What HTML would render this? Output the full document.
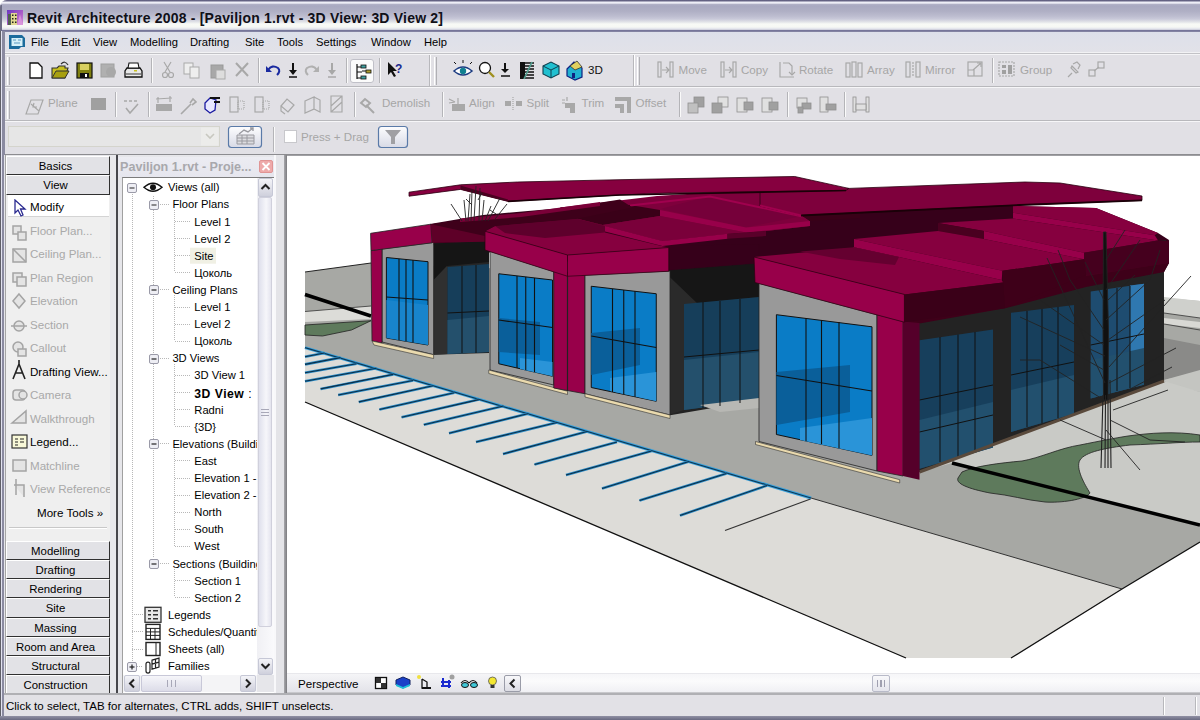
<!DOCTYPE html>
<html><head><meta charset="utf-8">
<style>
*{box-sizing:border-box}
html,body{margin:0;padding:0}
body{width:1200px;height:720px;overflow:hidden;position:relative;background:#fff;font-family:"Liberation Sans",sans-serif;font-size:11.2px;color:#000}
.a{position:absolute}
.t{position:absolute;white-space:nowrap;line-height:1}
.g{color:#a8a8a8}
#win{position:absolute;left:0;top:0;width:1200px;height:720px;background:#e1e0e5;border-top-left-radius:7px;overflow:hidden}
#title{left:0;top:0;width:1200px;height:32px;background:linear-gradient(to bottom,#5d5b7d 0px,#6a6888 1px,#ececf6 2px,#f0f0f8 3px,#b0b0c6 4.5px,#a9a9c1 6px,#afafc4 11px,#bcbccf 16px,#c9c9d9 19px,#e2e4e8 22px,#f8faf6 24px,#f6f8f4 27px,#e6e8ee 28.5px,#c8c8d6 30px,#76769a 30.5px,#8a8aa6 32px)}
#menu{left:0;top:32px;width:1200px;height:21px;background:linear-gradient(#dde0ea,#e2e2e8)}
.tb{position:absolute;height:32px;background:#e1e0e4}
.sep{position:absolute;width:2px;border-left:1px solid #b4b4b8;border-right:1px solid #fafafa}
.grip{position:absolute;width:3px;border-left:1px solid #fff;border-right:1px solid #b0b0b4}
.hl{position:absolute;left:0;width:1200px;height:1px}
</style></head><body>
<div id="win">
<div id="title" class="a"></div>
<!-- app icon -->
<svg class="a" style="left:7px;top:10px" width="16" height="15" viewBox="0 0 16 15">
<defs><linearGradient id="ig" x1="0" y1="0" x2="1" y2="1"><stop offset="0" stop-color="#6a38c0"/><stop offset="0.6" stop-color="#b060c8"/><stop offset="1" stop-color="#d890d8"/></linearGradient></defs>
<rect x="0" y="0" width="16" height="15" fill="url(#ig)"/>
<rect x="1" y="4" width="3" height="11" fill="#506050"/>
<rect x="4" y="3" width="6" height="12" fill="#e0d890"/>
<rect x="5" y="4.5" width="1.5" height="1.5" fill="#222"/><rect x="8" y="4.5" width="1.5" height="1.5" fill="#222"/>
<rect x="5" y="8" width="1.5" height="1.5" fill="#222"/><rect x="8" y="8" width="1.5" height="1.5" fill="#222"/>
<rect x="5" y="11.5" width="1.5" height="1.5" fill="#222"/><rect x="8" y="11.5" width="1.5" height="1.5" fill="#222"/>
<path d="M10,15 L13,4 L16,15 Z" fill="#e0a0e0" opacity="0.7"/>
</svg>
<div class="t" style="left:27px;top:11px;font-weight:bold;font-size:14px;letter-spacing:0.2px;color:#101018">Revit Architecture 2008 - [Paviljon 1.rvt - 3D View: 3D View 2]</div>

<div id="menu" class="a"></div>
<svg class="a" style="left:8px;top:34px" width="18" height="15" viewBox="0 0 18 15">
<path d="M1,1 h13 l3,3 v9 h-4 l-2,2 h-10 Z" fill="#1c6c9c"/>
<rect x="3.5" y="4" width="11" height="8" fill="#d6f0f8"/>
<path d="M5,6 h3 M10,6 h3 M6,9 h6" stroke="#5a9ac0" stroke-width="1.2"/>
</svg>
<div class="t" style="left:31px;top:36.5px">File</div>
<div class="t" style="left:61px;top:36.5px">Edit</div>
<div class="t" style="left:93px;top:36.5px">View</div>
<div class="t" style="left:130px;top:36.5px">Modelling</div>
<div class="t" style="left:190px;top:36.5px">Drafting</div>
<div class="t" style="left:245px;top:36.5px">Site</div>
<div class="t" style="left:277px;top:36.5px">Tools</div>
<div class="t" style="left:316px;top:36.5px">Settings</div>
<div class="t" style="left:371px;top:36.5px">Window</div>
<div class="t" style="left:424px;top:36.5px">Help</div>

<!-- toolbar area lines -->
<div class="hl" style="top:52px;background:#f2f2f4"></div>
<div class="hl" style="top:53px;background:#c2c2c6"></div>
<div class="hl" style="top:54px;background:#f4f4f6"></div>
<div class="hl" style="top:86px;background:#b8b8bc"></div>
<div class="hl" style="top:87px;background:#f6f6f8"></div>
<div class="hl" style="top:120px;background:#b8b8bc"></div>
<div class="hl" style="top:121px;background:#f6f6f8"></div>
<div class="hl" style="top:154px;background:#8c8c90"></div>

<!-- ROW1 / ROW2 / OPTIONS placeholder -->
<!--RSTART--><style>
.tt{position:absolute;white-space:nowrap;line-height:1;font-size:11.6px;color:#a6a6a6}
</style>
<!-- row separators between toolbars -->
<div class="grip" style="left:7px;top:57px;height:28px"></div>
<div class="grip" style="left:7px;top:91px;height:28px"></div>
<div class="sep" style="left:151px;top:58px;height:25px"></div>
<div class="sep" style="left:258px;top:58px;height:25px"></div>
<div class="sep" style="left:346px;top:58px;height:25px"></div>
<div class="sep" style="left:379px;top:58px;height:25px"></div>
<div class="a" style="left:429px;top:55px;width:2px;height:31px;border-left:1px solid #b8b8bc;border-right:1px solid #fff"></div>
<div class="grip" style="left:434px;top:57px;height:28px"></div>
<div class="a" style="left:633px;top:55px;width:2px;height:31px;border-left:1px solid #b8b8bc;border-right:1px solid #fff"></div>
<div class="grip" style="left:637px;top:57px;height:28px"></div>
<div class="sep" style="left:992px;top:58px;height:25px"></div>
<div class="sep" style="left:115px;top:92px;height:25px"></div>
<div class="sep" style="left:148px;top:92px;height:25px"></div>
<div class="sep" style="left:354px;top:92px;height:25px"></div>
<div class="sep" style="left:442px;top:92px;height:25px"></div>
<div class="sep" style="left:679px;top:92px;height:25px"></div>
<div class="sep" style="left:787px;top:92px;height:25px"></div>
<div class="sep" style="left:844px;top:92px;height:25px"></div>
<div class="sep" style="left:273px;top:127px;height:25px"></div>
<!-- pressed button -->
<div class="a" style="left:350px;top:59px;width:24px;height:24px;background:#fbfbfb;border:1px solid #c0c0c8;border-radius:3px"></div>
<svg class="a" style="left:0;top:52px" width="1200" height="102" viewBox="0 52 1200 102">
<!-- ROW 1 -->
<path d="M30,63 h8 l4,4 v11 h-12 Z" fill="#fff" stroke="#111" stroke-width="1.3"/>
<path d="M52,68 h5 l2,-2 h6 v2 h3 l-3,10 h-13 Z" fill="#c8c020" stroke="#333" stroke-width="1.1"/><path d="M52,78 l4,-7 h13 l-4,7 Z" fill="#a8a010" stroke="#333" stroke-width="1"/><path d="M61,64 q4,-4 7,1" stroke="#333" stroke-width="1.2" fill="none"/>
<rect x="77" y="63" width="15" height="15" fill="#808010" stroke="#111" stroke-width="1.2"/><rect x="80" y="64" width="9" height="6" fill="#d8d060"/><rect x="80" y="73" width="9" height="5" fill="#111"/><rect x="85" y="74" width="2" height="3" fill="#fff"/>
<rect x="101" y="64" width="13" height="13" fill="#b0b0b0" stroke="#a0a0a0"/><circle cx="111" cy="72" r="5" fill="#a8a8a8"/>
<path d="M127,68 h13 l2,3 v6 h-17 v-6 Z" fill="#e8e8e8" stroke="#111" stroke-width="1.3"/><path d="M129,63 h9 l1,5 h-11 Z" fill="#fff" stroke="#111" stroke-width="1.1"/><path d="M126,74 h15" stroke="#333" stroke-width="1"/><rect x="134" y="70" width="3" height="1.5" fill="#c8c020"/>
<path d="M164,62 l6,10 M171,62 l-6,10" stroke="#a8a8a8" stroke-width="1.2"/><circle cx="165" cy="75" r="2.5" fill="none" stroke="#a8a8a8" stroke-width="1.2"/><circle cx="171" cy="75" r="2.5" fill="none" stroke="#a8a8a8" stroke-width="1.2"/>
<rect x="184" y="63" width="9" height="11" fill="#eee" stroke="#aaa"/><rect x="190" y="67" width="9" height="11" fill="#eee" stroke="#aaa"/>
<rect x="211" y="65" width="12" height="13" fill="#a8a8a8" stroke="#999"/><rect x="216" y="70" width="9" height="9" fill="#ddd" stroke="#aaa"/>
<path d="M236,63 l12,13 M248,63 l-12,13" stroke="#a8a8a8" stroke-width="2"/>
<path d="M268,70 q4,-6 10,-2 q3,3 -1,7" stroke="#1a2aa0" stroke-width="2" fill="none"/><path d="M266,66 v6 h6 Z" fill="#1a2aa0"/>
<path d="M293,63 v8" stroke="#111" stroke-width="2"/><path d="M289,70 h8 l-4,5 Z" fill="#111"/><path d="M289,77 h8" stroke="#111" stroke-width="1.5"/>
<path d="M317,70 q-4,-6 -10,-2 q-3,3 1,7" stroke="#b0b0b0" stroke-width="2" fill="none"/><path d="M319,66 v6 h-6 Z" fill="#b0b0b0"/>
<path d="M332,63 v8" stroke="#a8a8a8" stroke-width="2"/><path d="M328,70 h8 l-4,5 Z" fill="#a8a8a8"/><path d="M328,77 h8" stroke="#a8a8a8" stroke-width="1.5"/>
<path d="M357,64 v15 M357,67 h5 M357,72 h5 M357,78 h5" stroke="#111" stroke-width="1.2" fill="none"/><rect x="361" y="65" width="5" height="3" fill="#40a0a0" stroke="#111" stroke-width="0.8"/><rect x="366" y="70" width="5" height="3" fill="#b0a030" stroke="#111" stroke-width="0.8"/><rect x="361" y="76" width="5" height="3" fill="#40a0a0" stroke="#111" stroke-width="0.8"/><path d="M366,71 h-4" stroke="#111"/>
<path d="M388,62 v13 l3,-3 l3,5 l2,-1 l-3,-5 h4 Z" fill="#111"/><text x="395" y="73" font-size="12" font-weight="bold" fill="#1a2a90" font-family="Liberation Sans">?</text>
<!-- toolbar 2 -->
<path d="M454,71 q9,-8 18,0 q-9,8 -18,0 Z" fill="#fff" stroke="#1a3a80" stroke-width="1.6"/><circle cx="463" cy="71" r="3.2" fill="#108090"/><path d="M456,64 l-2,-2 M463,63 v-3 M470,64 l2,-2" stroke="#111" stroke-width="1"/>
<circle cx="485" cy="68" r="5.5" fill="#fff" stroke="#111" stroke-width="1.3"/><path d="M489,72 l5,5" stroke="#a09020" stroke-width="2.4"/>
<path d="M505,63 v7" stroke="#111" stroke-width="2"/><path d="M501,69 h8 l-4,4 Z" fill="#111"/><path d="M501,76 h9" stroke="#111" stroke-width="1.5"/>
<path d="M520,63 h14 M520,66 h14 M520,69 h14 M520,72 h14 M520,75 h14 M520,78 h14" stroke="#111" stroke-width="1.4"/><rect x="520" y="62" width="5" height="17" fill="#111"/><path d="M532,62 l-8,17" stroke="#50a090" stroke-width="1.6"/>
<path d="M543,66 l8,-4 l8,4 v8 l-8,4 l-8,-4 Z" fill="#20c0d0" stroke="#104050" stroke-width="1.1"/><path d="M543,66 l8,4 l8,-4 M551,70 v8" stroke="#104050" stroke-width="1" fill="none"/>
<path d="M567,69 l7,-7 l8,6 v9 l-7,3 l-8,-4 Z" fill="#20b0d0" stroke="#102080" stroke-width="1.2"/><path d="M570,66 l7,-5 l5,6 l-7,3 Z" fill="#e0d060" stroke="#333" stroke-width="0.8"/><rect x="572" y="73" width="3" height="5" fill="#102080"/>
<text x="588" y="74" font-size="11.6" fill="#111" font-family="Liberation Sans">3D</text>
<!-- toolbar 3 -->
<g stroke="#a8a8a8" fill="none" stroke-width="1.2">
<rect x="658" y="62" width="3" height="15"/><rect x="670" y="62" width="3" height="15"/><path d="M662,70 h7 M666,67 l3,3 l-3,3"/>
<rect x="721" y="62" width="3" height="15"/><rect x="733" y="62" width="3" height="15"/><path d="M725,70 h7 M729,67 l3,3 l-3,3"/>
<path d="M780,62 v15 h14 M783,63 h6 l3,3 v8" /><path d="M789,72 l3,3 l3,-3"/>
<rect x="846" y="63" width="4" height="14"/><rect x="852" y="62" width="4" height="15"/><rect x="858" y="63" width="4" height="14"/>
<rect x="906" y="62" width="4" height="15"/><rect x="916" y="62" width="4" height="15"/><path d="M913,62 v15" stroke-dasharray="2,1"/>
<rect x="968" y="62" width="14" height="14"/><path d="M968,70 h6 v6 M973,70 l8,-7 M977,63 h4 v4"/>
<rect x="999" y="62" width="15" height="14" stroke-dasharray="2,1"/>
<path d="M1068,77 l4,-4 M1072,66 l6,6 l-2,1 l-5,-5 Z M1073,64 l4,-2 l3,3 l-2,4"/>
<rect x="1089" y="70" width="6" height="6"/><rect x="1098" y="62" width="6" height="6"/><path d="M1094,71 l5,-4"/>
</g>
<rect x="1002" y="65" width="4" height="3" fill="#a0a0a0"/><rect x="1002" y="70" width="4" height="4" fill="#a0a0a0"/><rect x="1008" y="65" width="4" height="9" fill="#a0a0a0"/>
<!-- ROW 2 -->
<g stroke="#a8a8a8" fill="none" stroke-width="1.2">
<path d="M26,114 l5,-14 h12 l-5,14 Z M31,104 l8,7 M34,103 l-1,4 l4,0"/>
<path d="M124,101 h3 M129,101 h3 M134,101 h3 M126,108 l4,5 l8,-9" stroke-width="1.6"/>
<path d="M156,99 l16,-1 M158,97 v6 M170,96 v6"/>
<path d="M181,114 l10,-10 M190,103 l3,-4 l3,3 l-4,3" stroke-width="1.6"/>
<rect x="230" y="97" width="8" height="15"/><rect x="238" y="101" width="6" height="8" stroke-dasharray="1,1"/>
<rect x="255" y="97" width="8" height="15"/><rect x="263" y="101" width="6" height="8" stroke-dasharray="1,1"/>
<path d="M281,106 l6,-7 l7,6 l-6,7 Z M281,106 v5 l4,3"/>
<path d="M305,101 l9,-4 v12 l-9,4 Z M314,97 l6,3 v12 l-6,-3"/>
<path d="M331,96 h11 v16 h-11 Z M331,106 l11,-10 M331,112 l11,-10"/>
<path d="M361,103 l4,-4 l5,4 l-4,4 Z M366,105 l8,8" stroke-width="2"/>
<path d="M449,99 l6,3 M449,103 l6,-1 M458,98 v10"/>
<path d="M506,103 h5 M516,103 h5 M513,97 v13" stroke-dasharray="1,1"/>
<path d="M562,100 h3 M562,103 h3 M567,97 v4"/>
</g>
<rect x="91" y="98" width="15" height="12" fill="#a0a0a0"/>
<rect x="156" y="104" width="16" height="7" fill="#a8a8a8"/>
<path d="M205,103 l5,-5 l6,2 l-1,10 l-5,3 l-5,-4 Z" fill="#e8e8ff" stroke="#1a1aa0" stroke-width="1.3"/><rect x="210" y="97" width="10" height="2" fill="#111"/><rect x="214" y="101" width="6" height="2" fill="#111"/>
<rect x="452" y="104" width="13" height="7" fill="#a8a8a8"/>
<rect x="505" y="101" width="6" height="5" fill="#a8a8a8"/><rect x="516" y="101" width="6" height="5" fill="#a8a8a8"/>
<path d="M565,103 h10 v10 h-5 v-5 h-5 Z" fill="#a8a8a8"/>
<path d="M615,97 h16 v16 h-4 v-12 h-12 Z M615,104 h9 v9 h-4 v-5 h-5 Z" fill="#a8a8a8"/>
<g fill="#a0a0a0" stroke="#909090" stroke-width="0.8">
<rect x="694" y="97" width="10" height="10"/><rect x="688" y="103" width="10" height="10" fill="#c0c0c0"/>
<rect x="718" y="97" width="10" height="10" fill="#e0e0e0"/><rect x="712" y="103" width="10" height="10"/>
<rect x="737" y="98" width="10" height="14" fill="#e0e0e0"/><rect x="744" y="102" width="9" height="8"/>
<rect x="762" y="98" width="10" height="14" fill="#e0e0e0"/><rect x="769" y="102" width="9" height="8"/>
<rect x="797" y="98" width="10" height="10" fill="#e0e0e0"/><rect x="802" y="103" width="9" height="6"/><rect x="798" y="107" width="5" height="6"/>
<rect x="820" y="97" width="8" height="15" fill="#e0e0e0"/><rect x="826" y="104" width="10" height="6"/>
<rect x="853" y="97" width="3" height="15" fill="#e0e0e0"/><rect x="866" y="97" width="3" height="15" fill="#e0e0e0"/><rect x="856" y="104" width="10" height="6" fill="#e0e0e0"/>
</g>
<!-- OPTIONS BAR -->
<rect x="8.5" y="126.5" width="211" height="20" fill="#e6e6e6" stroke="#d4d4cc"/>
<rect x="201" y="127.5" width="17.5" height="18" fill="#ececea"/>
<path d="M206,134 l4,4 l4,-4" stroke="#c8c8c0" stroke-width="1.6" fill="none"/>
<defs><linearGradient id="bg1" x1="0" y1="0" x2="0" y2="1"><stop offset="0" stop-color="#fdfdfe"/><stop offset="1" stop-color="#d8dae6"/></linearGradient></defs><rect x="228.5" y="126.5" width="33" height="21" rx="3" fill="url(#bg1)" stroke="#5a7aa8" stroke-width="1.2"/>
<path d="M237,135 h17 v9 h-17 Z M237,138 h17 M237,141 h17 M242,135 v9 M247,135 v9" stroke="#9a9aa0" stroke-width="1" fill="#dcdce0"/>
<path d="M239,134 l5,-4 l4,2 l5,-4 M250,128 h3 v3" stroke="#9a9aa0" stroke-width="1.4" fill="none"/>
<rect x="284.5" y="130.5" width="12" height="12" fill="#fff" stroke="#c8c8cc"/>
<rect x="378.5" y="126.5" width="29" height="21" rx="3" fill="url(#bg1)" stroke="#5a7aa8" stroke-width="1.2"/>
<path d="M385,130 h16 l-6,7 v7 h-4 v-7 Z" fill="#a0a0a4"/>
</svg>
<div class="tt" style="left:48px;top:96.5px">Plane</div>
<div class="tt" style="left:382px;top:96.5px">Demolish</div>
<div class="tt" style="left:469px;top:96.5px">Align</div>
<div class="tt" style="left:526.5px;top:96.5px">Split</div>
<div class="tt" style="left:581.5px;top:96.5px">Trim</div>
<div class="tt" style="left:635.5px;top:96.5px">Offset</div>
<div class="tt" style="left:678.5px;top:64px">Move</div>
<div class="tt" style="left:741px;top:64px">Copy</div>
<div class="tt" style="left:799px;top:64px">Rotate</div>
<div class="tt" style="left:867px;top:64px">Array</div>
<div class="tt" style="left:925px;top:64px">Mirror</div>
<div class="tt" style="left:1020px;top:64px">Group</div>
<div class="tt" style="left:301px;top:130.5px">Press + Drag</div>
<!--REND-->

<!-- left border -->
<div class="a" style="left:0;top:5px;width:2px;height:26px;background:#6c6c84"></div>
<div class="a" style="left:0;top:31px;width:5px;height:689px;background:linear-gradient(to right,#606068 0,#606068 1px,#e2e2f0 1px,#e2e2f0 2.5px,#8a8aa0 2.5px,#8a8aa0 5px)"></div>


<!--LSTART--><!-- DESIGN BAR -->
<div class="a" style="left:4px;top:155px;width:112px;height:539px;background:#e6e6ea"></div>
<div class="a" style="left:5px;top:155px;width:1px;height:539px;background:#a4a4a4"></div>
<div class="a" style="left:6px;top:195px;width:105.5px;height:346px;background:#efefef"></div>
<style>
.db{position:absolute;left:6px;width:104px;background:#e2e2e6;border-top:1px solid #fff;border-left:1px solid #fff;border-right:1px solid #303030;border-bottom:1px solid #303030;text-align:center;line-height:18.6px;font-size:11.4px;padding-right:5px}
.di{position:absolute;left:30px;white-space:nowrap;line-height:1;font-size:11.6px;color:#a9a9a9}
.tr{position:absolute;white-space:nowrap;line-height:1;font-size:11.2px}
</style>
<div class="db" style="top:156px;height:19px">Basics</div>
<div class="db" style="top:175px;height:20px">View</div>
<div class="a" style="left:8px;top:195px;width:101px;height:22px;background:#fff;border-bottom:1px solid #d4d4d4"></div>
<svg class="a" style="left:14px;top:199px" width="13" height="18" viewBox="0 0 13 18"><path d="M1,1 L1,14 L4,11 L7,17 L9,16 L6.5,10 L11,10 Z" fill="#fff" stroke="#2a2a90" stroke-width="1.3"/></svg>
<div class="di" style="top:201px;color:#000">Modify</div>
<div class="di" style="top:224.5px">Floor Plan...</div>
<div class="di" style="top:248px">Ceiling Plan...</div>
<div class="di" style="top:271.5px">Plan Region</div>
<div class="di" style="top:295px">Elevation</div>
<div class="di" style="top:318.5px">Section</div>
<div class="di" style="top:342px">Callout</div>
<div class="di" style="top:365.5px;color:#000">Drafting View...</div>
<div class="di" style="top:389px">Camera</div>
<div class="di" style="top:412.5px">Walkthrough</div>
<div class="di" style="top:436px;color:#000">Legend...</div>
<div class="di" style="top:459.5px">Matchline</div>
<div class="di" style="top:483px">View Reference</div>
<div class="di" style="top:506.5px;left:37px;color:#000">More Tools &#187;</div>
<svg class="a" style="left:10px;top:223px" width="20" height="300" viewBox="0 0 20 300">
<g fill="#e4e4e4" stroke="#a4a4a4" stroke-width="1.5">
<rect x="3" y="3" width="8" height="8"/><rect x="8" y="9" width="8" height="8"/>
<rect x="3" y="26" width="13" height="13"/><path d="M3,26 L16,39"/>
<rect x="3" y="50" width="9" height="9"/><rect x="7" y="54" width="9" height="9"/>
<path d="M9,71 L15,78 L9,85 L3,78 Z"/>
<circle cx="9" cy="103" r="5"/><path d="M1,103 L17,103"/>
<circle cx="8" cy="124" r="5"/><rect x="8" y="126" width="8" height="7"/>
<rect x="3" y="167" width="12" height="10" rx="3"/><circle cx="13" cy="172" r="4"/>
<path d="M2,200 L16,188 L16,200 Z"/>
<rect x="3" y="237" width="13" height="11"/>
<path d="M4,262 L14,262 L14,274 M6,256 L6,272"/>
</g>
<path d="M9,141 L3,156 M9,141 L15,156 M5,150 L13,150 M9,141 L9,137" stroke="#222" stroke-width="1.6" fill="none"/>
<rect x="2" y="212" width="15" height="13" fill="#f8f8d8" stroke="#333" stroke-width="1.2"/>
<path d="M5,216 L8,216 M10,216 L14,216 M5,219 L8,219 M10,219 L14,219 M5,222 L8,222" stroke="#222" stroke-width="1"/>
</svg>
<div class="a" style="left:9px;top:527px;width:98px;height:2px;border-top:1px solid #c8c8c8;border-bottom:1px solid #fff"></div>
<div class="a" style="left:6px;top:541px;width:104px;height:153px;background:#e6e6ea"></div>
<div class="db" style="top:541px;height:19px">Modelling</div>
<div class="db" style="top:560px;height:19px">Drafting</div>
<div class="db" style="top:579px;height:19px">Rendering</div>
<div class="db" style="top:598px;height:19.5px">Site</div>
<div class="db" style="top:617.5px;height:19px">Massing</div>
<div class="db" style="top:636.5px;height:19px">Room and Area</div>
<div class="db" style="top:655.5px;height:19px">Structural</div>
<div class="db" style="top:674.5px;height:19px">Construction</div>

<!-- PROJECT BROWSER -->
<div class="a" style="left:110px;top:155px;width:6px;height:539px;background:#e8e8ec"></div>
<div class="a" style="left:116px;top:155px;width:2px;height:539px;background:#46464c"></div>
<div class="a" style="left:118px;top:155px;width:166px;height:539px;background:#e6e6ea"></div>
<div class="a" style="left:118px;top:157px;width:156px;height:20px;background:linear-gradient(#ececf2,#e6e6ee)"></div>
<div class="tr" style="left:120px;top:161px;font-weight:bold;font-size:12.6px;color:#a8a8ac">Paviljon 1.rvt - Proje...</div>
<div class="a" style="left:259px;top:160px;width:14px;height:13px;background:#eeaaaa;border:1px solid #e09494;border-radius:2px"></div>
<svg class="a" style="left:259px;top:160px" width="14" height="13"><path d="M3.5,3 L10.5,10 M10.5,3 L3.5,10" stroke="#fff" stroke-width="1.8"/></svg>
<div class="a" style="left:122px;top:177px;width:152px;height:516px;border-top:1px solid #7c7c7c;border-left:1px solid #a0a0a0;background:#fff"></div>
<!-- v scrollbar -->
<div class="a" style="left:257px;top:178px;width:17px;height:497px;background:linear-gradient(to right,#f0f0f4,#fafafc)"></div>
<div class="a" style="left:258px;top:178px;width:15px;height:19px;background:linear-gradient(#f4f4f8,#cfd0dc);border:1px solid #c6c8d6;border-radius:2px"></div>
<svg class="a" style="left:258px;top:178px" width="15" height="19"><path d="M3.5,11 L7.5,7 L11.5,11" stroke="#222" stroke-width="2" fill="none"/></svg>
<div class="a" style="left:258px;top:197px;width:14px;height:430px;background:linear-gradient(to right,#dfe0ec,#f6f6fa 60%,#e4e4ee);border:1px solid #d0d0dc;border-radius:2px"></div>
<div class="a" style="left:261px;top:409px;width:8px;height:7px;border-top:1px solid #a8a8b8;border-bottom:1px solid #a8a8b8"></div>
<div class="a" style="left:261px;top:412px;width:8px;height:1px;background:#a8a8b8"></div>
<div class="a" style="left:258px;top:658px;width:15px;height:17px;background:linear-gradient(#f4f4f8,#cfd0dc);border:1px solid #c6c8d6;border-radius:2px"></div>
<svg class="a" style="left:258px;top:658px" width="15" height="17"><path d="M3.5,6 L7.5,10 L11.5,6" stroke="#222" stroke-width="2" fill="none"/></svg>
<!-- h scrollbar -->
<div class="a" style="left:123px;top:675px;width:134px;height:17px;background:#f4f4f6"></div>
<div class="a" style="left:124px;top:675px;width:16px;height:17px;background:linear-gradient(#f4f4f8,#cfd0dc);border:1px solid #c6c8d6;border-radius:2px"></div>
<svg class="a" style="left:124px;top:675px" width="16" height="17"><path d="M10,4.5 L6,8.5 L10,12.5" stroke="#222" stroke-width="2" fill="none"/></svg>
<div class="a" style="left:141px;top:675px;width:61px;height:17px;background:linear-gradient(#f6f6fa,#dcdce8);border:1px solid #c8c8d8;border-radius:2px"></div>
<div class="a" style="left:167px;top:680px;width:9px;height:7px;border-left:1px solid #a8a8b8;border-right:1px solid #a8a8b8"></div>
<div class="a" style="left:171px;top:680px;width:1px;height:7px;background:#a8a8b8"></div>
<div class="a" style="left:240px;top:675px;width:16px;height:17px;background:linear-gradient(#f4f4f8,#cfd0dc);border:1px solid #c6c8d6;border-radius:2px"></div>
<svg class="a" style="left:240px;top:675px" width="16" height="17"><path d="M6,4.5 L10,8.5 L6,12.5" stroke="#222" stroke-width="2" fill="none"/></svg>
<div class="a" style="left:257px;top:675px;width:17px;height:17px;background:#e6e6ea"></div>
<div class="a" style="left:274px;top:155px;width:2px;height:539px;background:#f8f8fa"></div>
<div class="a" style="left:276px;top:155px;width:8px;height:539px;background:#e4e4e8"></div>
<!--TSTART--><div class="a" style="left:123px;top:178px;width:134px;height:497px;overflow:hidden">
<svg class="a" style="left:0;top:0" width="134" height="497">
<line x1="9.5" y1="14" x2="9.5" y2="483" stroke="#b8b8b8" stroke-width="1" stroke-dasharray="1,1" shape-rendering="crispEdges"/>
<line x1="30.5" y1="18" x2="30.5" y2="380" stroke="#b8b8b8" stroke-width="1" stroke-dasharray="1,1" shape-rendering="crispEdges"/>
<line x1="9" y1="436.5" x2="20" y2="436.5" stroke="#b8b8b8" stroke-width="1" stroke-dasharray="1,1" shape-rendering="crispEdges"/>
<line x1="9" y1="453.5" x2="20" y2="453.5" stroke="#b8b8b8" stroke-width="1" stroke-dasharray="1,1" shape-rendering="crispEdges"/>
<line x1="9" y1="471.5" x2="20" y2="471.5" stroke="#b8b8b8" stroke-width="1" stroke-dasharray="1,1" shape-rendering="crispEdges"/>
<line x1="14" y1="488.5" x2="20" y2="488.5" stroke="#b8b8b8" stroke-width="1" stroke-dasharray="1,1" shape-rendering="crispEdges"/>
<line x1="35" y1="26.5" x2="47" y2="26.5" stroke="#b8b8b8" stroke-width="1" stroke-dasharray="1,1" shape-rendering="crispEdges"/>
<line x1="35" y1="111.5" x2="47" y2="111.5" stroke="#b8b8b8" stroke-width="1" stroke-dasharray="1,1" shape-rendering="crispEdges"/>
<line x1="35" y1="180.5" x2="47" y2="180.5" stroke="#b8b8b8" stroke-width="1" stroke-dasharray="1,1" shape-rendering="crispEdges"/>
<line x1="35" y1="265.5" x2="47" y2="265.5" stroke="#b8b8b8" stroke-width="1" stroke-dasharray="1,1" shape-rendering="crispEdges"/>
<line x1="35" y1="385.5" x2="47" y2="385.5" stroke="#b8b8b8" stroke-width="1" stroke-dasharray="1,1" shape-rendering="crispEdges"/>
<line x1="51.5" y1="32" x2="51.5" y2="94" stroke="#b8b8b8" stroke-width="1" stroke-dasharray="1,1" shape-rendering="crispEdges"/>
<line x1="52" y1="43.5" x2="68" y2="43.5" stroke="#b8b8b8" stroke-width="1" stroke-dasharray="1,1" shape-rendering="crispEdges"/>
<line x1="52" y1="60.5" x2="68" y2="60.5" stroke="#b8b8b8" stroke-width="1" stroke-dasharray="1,1" shape-rendering="crispEdges"/>
<line x1="52" y1="77.5" x2="68" y2="77.5" stroke="#b8b8b8" stroke-width="1" stroke-dasharray="1,1" shape-rendering="crispEdges"/>
<line x1="52" y1="94.5" x2="68" y2="94.5" stroke="#b8b8b8" stroke-width="1" stroke-dasharray="1,1" shape-rendering="crispEdges"/>
<line x1="51.5" y1="117" x2="51.5" y2="163" stroke="#b8b8b8" stroke-width="1" stroke-dasharray="1,1" shape-rendering="crispEdges"/>
<line x1="52" y1="129.5" x2="68" y2="129.5" stroke="#b8b8b8" stroke-width="1" stroke-dasharray="1,1" shape-rendering="crispEdges"/>
<line x1="52" y1="146.5" x2="68" y2="146.5" stroke="#b8b8b8" stroke-width="1" stroke-dasharray="1,1" shape-rendering="crispEdges"/>
<line x1="52" y1="163.5" x2="68" y2="163.5" stroke="#b8b8b8" stroke-width="1" stroke-dasharray="1,1" shape-rendering="crispEdges"/>
<line x1="51.5" y1="186" x2="51.5" y2="248" stroke="#b8b8b8" stroke-width="1" stroke-dasharray="1,1" shape-rendering="crispEdges"/>
<line x1="52" y1="197.5" x2="68" y2="197.5" stroke="#b8b8b8" stroke-width="1" stroke-dasharray="1,1" shape-rendering="crispEdges"/>
<line x1="52" y1="214.5" x2="68" y2="214.5" stroke="#b8b8b8" stroke-width="1" stroke-dasharray="1,1" shape-rendering="crispEdges"/>
<line x1="52" y1="231.5" x2="68" y2="231.5" stroke="#b8b8b8" stroke-width="1" stroke-dasharray="1,1" shape-rendering="crispEdges"/>
<line x1="52" y1="248.5" x2="68" y2="248.5" stroke="#b8b8b8" stroke-width="1" stroke-dasharray="1,1" shape-rendering="crispEdges"/>
<line x1="51.5" y1="271" x2="51.5" y2="368" stroke="#b8b8b8" stroke-width="1" stroke-dasharray="1,1" shape-rendering="crispEdges"/>
<line x1="52" y1="282.5" x2="68" y2="282.5" stroke="#b8b8b8" stroke-width="1" stroke-dasharray="1,1" shape-rendering="crispEdges"/>
<line x1="52" y1="300.5" x2="68" y2="300.5" stroke="#b8b8b8" stroke-width="1" stroke-dasharray="1,1" shape-rendering="crispEdges"/>
<line x1="52" y1="317.5" x2="68" y2="317.5" stroke="#b8b8b8" stroke-width="1" stroke-dasharray="1,1" shape-rendering="crispEdges"/>
<line x1="52" y1="334.5" x2="68" y2="334.5" stroke="#b8b8b8" stroke-width="1" stroke-dasharray="1,1" shape-rendering="crispEdges"/>
<line x1="52" y1="351.5" x2="68" y2="351.5" stroke="#b8b8b8" stroke-width="1" stroke-dasharray="1,1" shape-rendering="crispEdges"/>
<line x1="52" y1="368.5" x2="68" y2="368.5" stroke="#b8b8b8" stroke-width="1" stroke-dasharray="1,1" shape-rendering="crispEdges"/>
<line x1="51.5" y1="391" x2="51.5" y2="419" stroke="#b8b8b8" stroke-width="1" stroke-dasharray="1,1" shape-rendering="crispEdges"/>
<line x1="52" y1="402.5" x2="68" y2="402.5" stroke="#b8b8b8" stroke-width="1" stroke-dasharray="1,1" shape-rendering="crispEdges"/>
<line x1="52" y1="419.5" x2="68" y2="419.5" stroke="#b8b8b8" stroke-width="1" stroke-dasharray="1,1" shape-rendering="crispEdges"/>
<rect x="67" y="69.70000000000002" width="26" height="16" fill="#f0f0e4"/>
<rect x="4.5" y="5.5" width="9" height="9" rx="1.5" fill="#eeeef4" stroke="#9a9aa8" stroke-width="1"/><line x1="6.5" y1="10.0" x2="11.5" y2="10.0" stroke="#222" stroke-width="1.2"/>
<rect x="26.5" y="22.5" width="9" height="9" rx="1.5" fill="#eeeef4" stroke="#9a9aa8" stroke-width="1"/><line x1="28.5" y1="27.0" x2="33.5" y2="27.0" stroke="#222" stroke-width="1.2"/>
<rect x="26.5" y="107.5" width="9" height="9" rx="1.5" fill="#eeeef4" stroke="#9a9aa8" stroke-width="1"/><line x1="28.5" y1="112.0" x2="33.5" y2="112.0" stroke="#222" stroke-width="1.2"/>
<rect x="26.5" y="176.5" width="9" height="9" rx="1.5" fill="#eeeef4" stroke="#9a9aa8" stroke-width="1"/><line x1="28.5" y1="181.0" x2="33.5" y2="181.0" stroke="#222" stroke-width="1.2"/>
<rect x="26.5" y="261.5" width="9" height="9" rx="1.5" fill="#eeeef4" stroke="#9a9aa8" stroke-width="1"/><line x1="28.5" y1="266.0" x2="33.5" y2="266.0" stroke="#222" stroke-width="1.2"/>
<rect x="26.5" y="381.5" width="9" height="9" rx="1.5" fill="#eeeef4" stroke="#9a9aa8" stroke-width="1"/><line x1="28.5" y1="386.0" x2="33.5" y2="386.0" stroke="#222" stroke-width="1.2"/>
<rect x="4.5" y="484.5" width="9" height="9" rx="1.5" fill="#eeeef4" stroke="#9a9aa8" stroke-width="1"/><line x1="6.5" y1="489.0" x2="11.5" y2="489.0" stroke="#222" stroke-width="1.2"/><line x1="9.0" y1="486.5" x2="9.0" y2="491.5" stroke="#222" stroke-width="1.2"/>
<path d="M21,9.300000000000011 Q30,1.3000000000000114 39,9.300000000000011 Q30,17.30000000000001 21,9.300000000000011 Z" fill="#fff" stroke="#111" stroke-width="1.5"/><circle cx="30" cy="9.300000000000011" r="3" fill="#111"/>
<rect x="22" y="429.30000000000007" width="16" height="15" fill="#e8e8e8" stroke="#333" stroke-width="1.3"/><path d="M25,432.80000000000007 h3 M30,432.80000000000007 h5 M25,436.80000000000007 h3 M30,436.80000000000007 h5 M25,440.80000000000007 h3 M30,440.80000000000007 h5" stroke="#333" stroke-width="1.6"/>
<rect x="23" y="446.4000000000001" width="14" height="15" fill="#fff" stroke="#222" stroke-width="1.4"/><path d="M23,450.4000000000001 h14 M23,453.9000000000001 h14 M23,457.4000000000001 h14 M27.5,450.4000000000001 v11 M32,450.4000000000001 v11" stroke="#222" stroke-width="1"/>
<rect x="23" y="464.5" width="14" height="13" fill="#fff" stroke="#222" stroke-width="1.4"/><path d="M33,465.0 v12" stroke="#222" stroke-width="1"/>
<rect x="23" y="484.10000000000014" width="4" height="11" rx="2" fill="#fff" stroke="#222" stroke-width="1.2"/><path d="M29,482.10000000000014 l7,-2 v9 l-7,2 Z M29,486.10000000000014 l7,-2 M32.5,481.10000000000014 v9" fill="#fff" stroke="#222" stroke-width="1.2"/>
</svg>
<div class="tr" style="left:45.0px;top:4.3px">Views (all)</div>
<div class="tr" style="left:49.4px;top:21.4px">Floor Plans</div>
<div class="tr" style="left:71.3px;top:38.5px">Level 1</div>
<div class="tr" style="left:71.3px;top:55.6px">Level 2</div>
<div class="tr" style="left:71.3px;top:72.7px">Site</div>
<div class="tr" style="left:71.3px;top:89.8px">Цоколь</div>
<div class="tr" style="left:49.4px;top:106.9px">Ceiling Plans</div>
<div class="tr" style="left:71.3px;top:124.0px">Level 1</div>
<div class="tr" style="left:71.3px;top:141.1px">Level 2</div>
<div class="tr" style="left:71.3px;top:158.2px">Цоколь</div>
<div class="tr" style="left:49.4px;top:175.3px">3D Views</div>
<div class="tr" style="left:71.3px;top:192.4px">3D View 1</div>
<div class="tr" style="left:71.3px;top:209.5px;font-weight:bold;font-size:12.2px;letter-spacing:0.5px">3D View <span style="font-weight:normal">:</span></div>
<div class="tr" style="left:71.3px;top:226.6px">Radni</div>
<div class="tr" style="left:71.3px;top:243.7px">{3D}</div>
<div class="tr" style="left:49.4px;top:260.8px">Elevations (Building Elevation)</div>
<div class="tr" style="left:71.3px;top:277.9px">East</div>
<div class="tr" style="left:71.3px;top:295.0px">Elevation 1 - a</div>
<div class="tr" style="left:71.3px;top:312.1px">Elevation 2 - a</div>
<div class="tr" style="left:71.3px;top:329.2px">North</div>
<div class="tr" style="left:71.3px;top:346.3px">South</div>
<div class="tr" style="left:71.3px;top:363.4px">West</div>
<div class="tr" style="left:49.4px;top:380.5px">Sections (Building Section)</div>
<div class="tr" style="left:71.3px;top:397.6px">Section 1</div>
<div class="tr" style="left:71.3px;top:414.7px">Section 2</div>
<div class="tr" style="left:45.0px;top:431.8px">Legends</div>
<div class="tr" style="left:45.0px;top:448.9px">Schedules/Quantities</div>
<div class="tr" style="left:45.0px;top:466.0px">Sheets (all)</div>
<div class="tr" style="left:45.0px;top:483.1px">Families</div>
</div><!--TEND-->
<!--LEND-->

<!-- 3D VIEW -->
<div class="a" style="left:284px;top:155px;width:3px;height:539px;background:linear-gradient(to right,#a8a8ac,#7c7c80)"></div>
<div class="a" style="left:287px;top:155px;width:913px;height:1px;background:#a0a0a4"></div>
<svg class="a" style="left:287px;top:156px" width="913" height="517" viewBox="287 156 913 517">
<rect x="287" y="156" width="913" height="517" fill="#fff"/>
<!-- ground -->
<polygon points="305,272 371,263 1000,290 1164,298 1200,301 1200,542 1122,589 1011,658 906,658 305,402" fill="#a7a8a4"/>
<polyline points="305,272 371,263" stroke="#222" stroke-width="1" fill="none"/>
<!-- right far bands -->
<polygon points="1164,297 1200,301 1200,318 1164,313" fill="#cfd0cc"/>
<polyline points="1164,313 1200,318" stroke="#333" stroke-width="0.8" fill="none"/>
<polygon points="1164,318 1200,322 1200,328 1164,324" fill="#d8d8d4"/>
<polyline points="1164,324 1200,330" stroke="#333" stroke-width="0.8" fill="none"/>
<polygon points="1164,338 1200,345 1200,372 1164,380" fill="#8a8a88"/>
<polygon points="1164,380 1200,370 1200,392 1170,385" fill="#c4c5c1"/>
<!-- left strips -->
<polygon points="305,311.5 371,306 371,319 305,322" fill="#dcdcd8"/>
<polyline points="305,311.5 371,306" stroke="#333" stroke-width="0.8" fill="none"/>
<polygon points="305,325 371,320.7 351.5,330 322.5,336 305,335" fill="#5e7a5c" stroke="#222" stroke-width="0.8"/>
<polyline points="305,294.5 371,316" stroke="#000" stroke-width="3.5" fill="none"/>
<!-- light plane -->
<polygon points="305,348 811,498 1122,589 1011,658 906,658 305,402" fill="#dddcd8"/>
<polyline points="305,402 906,658" stroke="#111" stroke-width="1.3" fill="none"/>
<polyline points="1011,658 1122,589 1200,542" stroke="#111" stroke-width="1.3" fill="none"/>
<polyline points="811,498 1122,589" stroke="#333" stroke-width="1" fill="none"/>
<!-- right lighter area and green blob -->
<polygon points="919.5,472 1164,381 1200,392 1200,525 952,463" fill="#c9cac6"/>
<path d="M962,472 C975,466 1000,463 1022,461 C1040,458 1060,448 1080,445 C1100,441 1115,438 1128,436 C1150,433 1175,431 1200,435 L1200,442 C1180,442 1160,444 1130,445 C1105,448 1085,452 1080,460 C1075,468 1085,485 1090,493 C1085,500 1060,503 1045,502 C1025,500 1010,495 990,493 C975,490 955,485 958,478 Z" fill="#5e7a5c" stroke="#222" stroke-width="0.8"/>
<polyline points="952,463 1200,525" stroke="#000" stroke-width="3.5" fill="none"/>
<!-- curb -->
<polyline points="305,347.6 811,498" stroke="#3aa2dc" stroke-width="3" fill="none"/>
<polyline points="305,347.6 811,498" stroke="#0c3a5a" stroke-width="1.2" fill="none"/>
<g stroke="#2a8ac4" stroke-width="2.6" fill="none">
<line x1="305" y1="356.8" x2="324.4" y2="353"/>
<line x1="305" y1="364.4" x2="340.5" y2="357.6"/>
<line x1="305" y1="372.8" x2="356.5" y2="363.7"/>
<line x1="305" y1="381.3" x2="376.4" y2="368.3"/>
<line x1="320.6" y1="388.9" x2="393.2" y2="374.4"/>
<line x1="338.2" y1="395" x2="413" y2="380.5"/>
<line x1="358.8" y1="401.9" x2="433" y2="385.8"/>
<line x1="379.4" y1="409.5" x2="454.3" y2="392.7"/>
<line x1="401.6" y1="417.2" x2="478.8" y2="399.6"/>
<line x1="423.8" y1="424.8" x2="503.5" y2="406"/>
<line x1="449" y1="433.2" x2="528.5" y2="413.5"/>
<line x1="476" y1="442" x2="557" y2="422.5"/>
<line x1="503" y1="454" x2="587" y2="431.5"/>
<line x1="534.5" y1="464.5" x2="617" y2="442"/>
<line x1="566" y1="475" x2="651.5" y2="451"/>
<line x1="602" y1="488.5" x2="689" y2="461.5"/>
<line x1="639.5" y1="500.5" x2="726.5" y2="473.5"/>
<line x1="680" y1="515.5" x2="767" y2="485.5"/>
</g>
<g stroke="#0a2e48" stroke-width="1.1" fill="none">
<line x1="305" y1="356.8" x2="324.4" y2="353"/>
<line x1="305" y1="364.4" x2="340.5" y2="357.6"/>
<line x1="305" y1="372.8" x2="356.5" y2="363.7"/>
<line x1="305" y1="381.3" x2="376.4" y2="368.3"/>
<line x1="320.6" y1="388.9" x2="393.2" y2="374.4"/>
<line x1="338.2" y1="395" x2="413" y2="380.5"/>
<line x1="358.8" y1="401.9" x2="433" y2="385.8"/>
<line x1="379.4" y1="409.5" x2="454.3" y2="392.7"/>
<line x1="401.6" y1="417.2" x2="478.8" y2="399.6"/>
<line x1="423.8" y1="424.8" x2="503.5" y2="406"/>
<line x1="449" y1="433.2" x2="528.5" y2="413.5"/>
<line x1="476" y1="442" x2="557" y2="422.5"/>
<line x1="503" y1="454" x2="587" y2="431.5"/>
<line x1="534.5" y1="464.5" x2="617" y2="442"/>
<line x1="566" y1="475" x2="651.5" y2="451"/>
<line x1="602" y1="488.5" x2="689" y2="461.5"/>
<line x1="639.5" y1="500.5" x2="726.5" y2="473.5"/>
<line x1="680" y1="515.5" x2="767" y2="485.5"/>
</g>
<line x1="725" y1="530.5" x2="810.5" y2="499" stroke="#333" stroke-width="1.1"/>
<!--BSTART--><!-- roof dark base -->
<polygon points="430,224 483,215 585,206 846,190 1013,206 1096,208 1158,233 1169,240 1166,264 1164,272 919.5,324 903,323 756,266 668,273 485,252 432,245" fill="#36001a"/>
<polygon points="668.7,270 759,263 759,263.5 668.7,270.5" fill="none"/>
<!-- right wing facade -->
<polygon points="903,294 1002,281 1086,250 1166,240 1169,263 1164,272 1164,381 919.5,472 903,476" fill="#232323"/>
<polygon points="903,294 1002,281 1086,250 1166,241 1169,263 1164,272 1086,287 1005,308.3 919.5,323.5 903,323" fill="#3e0019"/>
<polygon points="1086,250 1166,241 1169,263 1086,276" fill="#4a0020"/>
<polygon points="919.5,340.3 993,329.6 993,447.4 919.5,468.8" fill="#173f5c"/>
<polygon points="1011,312.8 1074,305 1074,413.7 1011,432" fill="#173f5c"/>
<polygon points="1090.7,291.4 1144,283.8 1144,384.7 1090.7,398.4" fill="#1e4c70"/>
<polygon points="1130,285.5 1144,283.8 1144,355 1130,358" fill="#2f78b0"/>
<polygon points="919.5,420 993,402 993,447.4 919.5,468.8" fill="#22506e"/>
<polygon points="1011,390 1074,375 1074,413.7 1011,432" fill="#22506e"/>
<polygon points="1090.7,360 1144,348 1144,384.7 1090.7,398.4" fill="#22506e"/>
<g stroke="#111" stroke-width="1" fill="none">
<line x1="940" y1="337" x2="940" y2="462"/><line x1="958" y1="334.5" x2="958" y2="457"/><line x1="975" y1="332" x2="975" y2="452"/>
<line x1="919.5" y1="400" x2="993" y2="385"/><line x1="919.5" y1="432" x2="993" y2="415"/>
<line x1="1027" y1="311" x2="1027" y2="427"/><line x1="1042" y1="309" x2="1042" y2="423"/><line x1="1058" y1="307" x2="1058" y2="418"/>
<line x1="1011" y1="375" x2="1074" y2="362"/>
<line x1="1104" y1="289.5" x2="1104" y2="395"/><line x1="1117" y1="288" x2="1117" y2="391"/><line x1="1130" y1="286" x2="1130" y2="388"/>
<line x1="1090.7" y1="345" x2="1144" y2="334"/>
</g>
<polyline points="919.5,472 1164,381" stroke="#5a4a3c" stroke-width="3" fill="none"/>
<!-- recess A-B -->
<polygon points="433.6,243.6 489,241 489,353 433.6,354.7" fill="#262626"/>
<polygon points="433.6,243.6 489,241 489,262 447,266 433.6,280" fill="#151515"/>
<polygon points="433.6,280 447,266 447.5,354 433.6,354.7" fill="#303030"/>
<polygon points="447.5,267 489,264 489,352 447.5,354" fill="#163e5a"/>
<polygon points="447.5,320 489,316 489,352 447.5,354" fill="#24506c"/>
<g stroke="#111" stroke-width="1" fill="none"><line x1="462" y1="266" x2="462" y2="353"/><line x1="476" y1="265" x2="476" y2="353"/><line x1="447.5" y1="313" x2="489" y2="311"/></g>
<!-- recess B-C -->
<polygon points="668.7,270 759,263 759,400 668.7,415.4" fill="#222"/>
<polygon points="668.7,270 759,263 759,297 684,305 668.7,302" fill="#161616"/>
<polygon points="668.7,276 699,305 684,305 684,410 668.7,415" fill="#2a2a2a"/>
<polygon points="668.7,246 759,244 759,263 668.7,270" fill="#36001a" stroke="#36001a" stroke-width="0.5"/>
<polygon points="684,304 759,297 759,400 684,410" fill="#163e5a"/>
<polygon points="684,360 759,352 759,400 684,410" fill="#24506c"/>
<polygon points="700,405 759,398 759,408 720,412" fill="#b8b8b4"/>
<g stroke="#111" stroke-width="1" fill="none"><line x1="703" y1="302" x2="703" y2="408"/><line x1="720" y1="301" x2="720" y2="406"/><line x1="740" y1="299" x2="740" y2="403"/><line x1="684" y1="357" x2="759" y2="350"/></g>
<!-- block A -->
<polygon points="382,249 433.6,242.4 433.6,354.7 382,342" fill="#999999" stroke="#222" stroke-width="0.8"/>
<polygon points="386.4,257.5 428,261.7 428,345 386.4,338" fill="#0a7cc6" stroke="#111" stroke-width="1"/>
<polygon points="386.4,300 428,305 428,345 386.4,338" fill="#1884cc"/>
<g stroke="#111" stroke-width="1.1" fill="none"><line x1="399" y1="259" x2="399" y2="340"/><line x1="406" y1="259.5" x2="406" y2="341"/><line x1="413" y1="260" x2="413" y2="342.5"/><line x1="386.4" y1="297" x2="428" y2="300"/></g>
<polygon points="371,250.6 382,249 382,343 372,341" fill="#98004a" stroke="#222" stroke-width="0.8"/>
<polygon points="372,341 433.6,354.7 433.6,358.5 374,345" fill="#eadaae" stroke="#333" stroke-width="0.6"/>
<polygon points="370.6,233.3 430.8,224.2 432,242.8 371,250.6" fill="#98004a" stroke="#222" stroke-width="0.8"/>
<polygon points="430.8,224.2 485,218 485,241.7 432,242.8" fill="#5e0028"/>
<!-- block B -->
<polygon points="490,251.3 553.75,271.6 553.75,385 490,370" fill="#999999" stroke="#222" stroke-width="0.8"/>
<polygon points="498.75,273.75 552.5,280 552.5,376.25 498.75,363.75" fill="#0a7cc6" stroke="#111" stroke-width="1"/>
<polygon points="498.75,318 540,322 540,355 498.75,352" fill="#0a5f9a"/>
<polygon points="520,358 552.5,362 552.5,376.25 520,369" fill="#2a94d8"/>
<g stroke="#111" stroke-width="1.1" fill="none"><line x1="517" y1="276" x2="517" y2="368"/><line x1="525.75" y1="277" x2="525.75" y2="370"/><line x1="534.5" y1="278" x2="534.5" y2="372"/><line x1="498.75" y1="320" x2="552.5" y2="327.5"/></g>
<polygon points="488.75,370 567.5,391.25 567.5,394.5 488.75,373.5" fill="#eadaae" stroke="#333" stroke-width="0.6"/>
<polygon points="553.75,271 585,275 585,393.75 553.75,388" fill="#98004a" stroke="#222" stroke-width="0.8"/>
<line x1="567.5" y1="276" x2="567.5" y2="391" stroke="#222" stroke-width="1.2"/>
<polygon points="585,275.2 670,271 670,415 585,393.75" fill="#999999" stroke="#222" stroke-width="0.8"/>
<polygon points="591.25,286.25 656.25,293.75 656.25,401.25 591.25,387.5" fill="#0a7cc6" stroke="#111" stroke-width="1"/>
<polygon points="591.25,333 640,328 640,365 591.25,375" fill="#0a5f9a"/>
<polygon points="610,378 656.25,372 656.25,401.25 610,391" fill="#2a94d8"/>
<g stroke="#111" stroke-width="1.1" fill="none"><line x1="612.5" y1="289" x2="612.5" y2="392"/><line x1="623.75" y1="290" x2="623.75" y2="394"/><line x1="635" y1="291" x2="635" y2="397"/><line x1="591.25" y1="336" x2="656.25" y2="347.5"/></g>
<polygon points="585,393.75 670,415 670,418.5 585,397" fill="#eadaae" stroke="#333" stroke-width="0.6"/>
<!-- block C -->
<polygon points="759,283.3 877,314.8 877,471 759,441.5" fill="#999999" stroke="#222" stroke-width="0.8"/>
<polygon points="776.4,314.7 872,326.8 872,455.4 776.4,434.5" fill="#0a7cc6" stroke="#111" stroke-width="1"/>
<polygon points="776.4,372 850,365 850,412 776.4,425" fill="#0a5f9a"/>
<polygon points="800,428 872,418 872,455.4 800,440" fill="#2a94d8"/>
<g stroke="#111" stroke-width="1.1" fill="none"><line x1="806" y1="318" x2="806" y2="441"/><line x1="821.5" y1="320" x2="821.5" y2="444"/><line x1="839" y1="322" x2="839" y2="448"/><line x1="776.4" y1="375.5" x2="872" y2="391"/></g>
<polygon points="755.5,441.5 899.7,479.7 899.7,483 755.5,444.5" fill="#eadaae" stroke="#333" stroke-width="0.6"/>
<polygon points="877,314.5 903,321.5 903,476 877,471" fill="#98004a" stroke="#222" stroke-width="0.8"/>
<polygon points="903,321.5 919.5,323 919.5,479.7 903,476" fill="#55002a"/>
<!-- ROOFS -->
<polygon points="1013,206 1096,208 1158,233 1154.7,235.3 1013,212.7" fill="#86003f"/>
<polygon points="1013,212.7 1154.7,235.3 1158,240.5 1013,218.5" fill="#98004a"/>
<polygon points="938,223 1013,218.5 1158,240.5 1084,252.7 984,231" fill="#86003f"/>
<polygon points="938,223 984,231 984,239 938,231" fill="#4a0020"/>
<polygon points="984,231 1084,252.7 1084,259.3 984,239" fill="#98004a"/>
<polygon points="1084,252.7 1158,240.5 1169,241 1169,263 1086,275 1084,259.3" fill="#45001e"/>
<polygon points="854,239 938,231 984,239 1084,259.3 1002.4,270.8 899.6,249" fill="#86003f"/>

<polygon points="854,239 899.6,249 1002.4,270.8 1001.7,279.9 899,257 854,247.25" fill="#98004a"/>
<polygon points="1002.4,270.8 1084,259.3 1086,275 1005,308.3 1003,282.6" fill="#3e0019"/>
<polygon points="754,257 852.5,248 854,247.25 899,257 1001.7,279.9 1003,282.6 904.4,294.4" fill="#86003f"/>
<polygon points="800,251.5 854,247.25 899,257 895,265 840,259" fill="#650030"/>
<polygon points="754,257 904.4,294.4 904.4,322.2 755,282.5" fill="#98004a" stroke="#2a0010" stroke-width="0.7"/>
<polygon points="904.4,294.4 1003,282.6 1005,308.3 904.4,322.2" fill="#3a0018"/>
<!-- block B roof -->
<polygon points="560,207.5 657,196 710,192.5 846,189 860,190 860,211 802.5,216 810,221 810,226 766,231 727.5,233.75 662.5,241 605,226 577.5,218.75" fill="#7e003c"/>
<polygon points="560,207.5 630,205 660,210 660,216 602.5,225 577.5,218.75" fill="#3a0018"/>
<polygon points="660,209 710,196 802.5,216 746,227.5" fill="#76003a"/>
<polyline points="630,205.5 710,196.5 802.5,216.5" stroke="#a0004e" stroke-width="2" fill="none"/>
<polygon points="660,210 746,227.5 810,221 810,226 746,232.5 660,216" fill="#98004a"/>
<polygon points="802.5,216 860,211 860,218 810,221" fill="#3a0018"/>
<polygon points="577.5,218.75 602.5,225 660,216 746,232.5 810,226 766,231 727.5,233.75 662.5,241 605,226" fill="#7a003a"/>
<polygon points="605,226 662.5,241 727.5,233.75 727.5,238.75 662.5,246 605,231.5" fill="#98004a"/>
<polygon points="727.5,233.75 766,231 766,236 727.5,238.75" fill="#5a002a"/>
<polygon points="485,231.25 495,226 577.5,218.75 605,226.25 605,232.5 662.5,246.25 668.75,247.5 567.5,255" fill="#86003f"/>
<polygon points="495,226 577.5,218.75 605,226.25 605,232.5 545,238 505,233" fill="#5e002c"/>
<polygon points="485,231.25 567.5,255 567.5,276.25 485,250" fill="#98004a" stroke="#2a0010" stroke-width="0.7"/>
<polygon points="567.5,255 668.75,247.5 668.75,271.25 567.5,276.25" fill="#98004a" stroke="#2a0010" stroke-width="0.7"/>
<!-- block A roof strip -->
<polygon points="430.8,224.2 460,220.6 521,215 620,199.5 632.5,207.5 577.5,218.75 495,226 485,231.25 485,236" fill="#3e001a"/>
<polygon points="460,218.6 521,213 600,202 600,206 521,217 460,222" fill="#7a0038"/>
<!-- canopy -->
<polygon points="760,190.6 848.8,188.4 1025,182 1060,183 1142,196 1142,200.4 1020,205 801,215.5 760,206" fill="#7e003c" stroke="#2a0010" stroke-width="0.8"/>
<polyline points="801,215.5 1020,205 1142,200.4" stroke="#1a0008" stroke-width="1.8" fill="none"/>
<polyline points="760,205.5 801,215.5" stroke="#a0004e" stroke-width="2" fill="none"/>
<polygon points="409,192.2 460.5,184.8 517.4,182 620,179.7 794.7,176.5 848.8,188.4 846,190.5 668,193 620,195 508,201.4 460.5,189.4 409,196.2" fill="#86003f" stroke="#2a0010" stroke-width="0.8"/>
<polygon points="460.5,185.5 508,199.5 508,201.4 460.5,189.4" fill="#4a0020"/>
<polyline points="508,201.4 620,195 846,190.5" stroke="#1a0008" stroke-width="1.6" fill="none"/>
<!-- trees -->
<g stroke="#222" stroke-width="0.9" fill="none">
<path d="M462,221 L451,204 M466,221 L464,200 M468,221 L470,194 M471,221 L472,190 M474,221 L476,186 M479,221 L480,188 M482,221 L484,200 M485,221 L491,206 M488,221 L500,198 M495,219 L507,204 M472,205 L466,199 M478,200 L482,193 M490,210 L496,214"/>
<polygon points="1103.5,232 1106,232 1108.5,330 1108,400 1103.5,400 1103,330" fill="#111"/>
<path d="M1101,468 L1103,395 M1105,468 L1105.5,395 M1108,468 L1108,395 M1111,468 L1110,380" stroke="#222" stroke-width="1.1"/>
<path d="M1105,383 L1047,258 M1105,356 L1020,317 M1109,367 L1191,276 M1109,383 L1176,348 M1113,398 L1172,367 M1113,410 L1168,390 M1110,420 L1150,440 M1150,440 L1185,442 M1104,330 L1070,280 M1070,280 L1058,250 M1104,300 L1085,262 M1106,290 L1140,240 M1106,320 L1150,280 M1150,280 L1160,250 M1104,345 L1040,300 M1104,400 L1040,360 M1040,360 L1020,360 M1106,440 L1060,420 M1106,430 L1140,470 M1106,260 L1125,230 M1104,370 L1060,345 M1108,340 L1165,300 M1108,300 L1135,275" stroke="#222" stroke-width="0.9"/>
</g>
<!--BEND-->
</svg>
<!-- view control bar -->
<!--VSTART--><div class="a" style="left:287px;top:673px;width:913px;height:20px;background:linear-gradient(#f6f6f8,#ececf0 50%,#e2e2e8)"></div>
<div class="a" style="left:287px;top:673px;width:913px;height:1px;background:#e8e8ec"></div>
<div class="a" style="left:287px;top:692px;width:913px;height:1px;background:#c8c8cc"></div>
<div class="a" style="left:521px;top:674px;width:679px;height:18px;background:linear-gradient(#f6f6f8,#fbfbfc 40%,#f0f0f4)"></div>
<div class="a" style="left:872px;top:675px;width:18px;height:17px;background:linear-gradient(#f8f8fa,#e4e4ec);border:1px solid #b8bac8;border-radius:2px"></div>
<div class="a" style="left:877px;top:680px;width:8px;height:7px;border-left:1px solid #a0a0b0;border-right:1px solid #a0a0b0"></div>
<div class="a" style="left:880px;top:680px;width:2px;height:7px;border-left:1px solid #a0a0b0;border-right:1px solid #a0a0b0"></div>
<div class="t" style="left:298px;top:678px;font-size:11.6px">Perspective</div>
<svg class="a" style="left:370px;top:673px" width="160" height="20" viewBox="370 673 160 20">
<rect x="375.5" y="677.5" width="11" height="11" fill="#fff" stroke="#111" stroke-width="1.3"/><rect x="376" y="678" width="5" height="5" fill="#333"/><rect x="381" y="683" width="5" height="5" fill="#333"/>
<path d="M396,680 l7,-3 l7,3 v5 l-7,3 l-7,-3 Z" fill="#1a40c8" stroke="#102060" stroke-width="1"/><path d="M396,684 l7,3 l7,-3 v2 l-7,3 l-7,-3 Z" fill="#20c0d8"/>
<circle cx="419" cy="677" r="2" fill="#f0e040"/><path d="M422,679 v9 h9 M422,679 l5,3 v6" stroke="#111" stroke-width="1.3" fill="none"/><path d="M422,688 h9" stroke="#111" stroke-width="2"/>
<path d="M441,682 h10 M443,678 v8 M449,680 v8 M441,686 h10" stroke="#1a2ad0" stroke-width="2" fill="none"/><circle cx="452" cy="677" r="2.5" fill="#a0a0a0"/>
<path d="M461,683 q4,-5 8,0 M469,683 q4,-5 8,0" stroke="#111" stroke-width="1.2" fill="none"/><ellipse cx="465" cy="685" rx="3.5" ry="2.5" fill="#40c8d8" stroke="#111" stroke-width="1"/><ellipse cx="474" cy="685" rx="3.5" ry="2.5" fill="#40c8d8" stroke="#111" stroke-width="1"/>
<circle cx="492.5" cy="681" r="4" fill="#f4e830" stroke="#555" stroke-width="0.8"/><rect x="490.5" y="685" width="4" height="3" fill="#333"/>
</svg>
<div class="a" style="left:504px;top:675px;width:17px;height:17px;background:linear-gradient(#f8f8fa,#dcdce4);border:1px solid #9a9ca8;border-radius:2px"></div>
<svg class="a" style="left:504px;top:675px" width="17" height="17"><path d="M10.5,4.5 L6.5,8.5 L10.5,12.5" stroke="#222" stroke-width="2" fill="none"/></svg>
<!--VEND-->
<!-- status bar -->
<div class="a" style="left:4px;top:693px;width:1196px;height:2px;background:#b0b0b4"></div>
<div class="a" style="left:4px;top:695px;width:1196px;height:21px;background:#e2e1e6"></div>
<div class="a" style="left:1163px;top:697px;width:2px;height:18px;border-left:1px solid #b8b8bc;border-right:1px solid #fff"></div>
<div class="a" style="left:1195px;top:697px;width:2px;height:18px;border-left:1px solid #b8b8bc;border-right:1px solid #fff"></div>
<div class="t" style="left:6px;top:700.5px;font-size:11.5px">Click to select, TAB for alternates, CTRL adds, SHIFT unselects.</div>
<div class="a" style="left:0;top:716px;width:1200px;height:4px;background:linear-gradient(#9090a4,#6a6a82)"></div>
</div>
</body></html>
